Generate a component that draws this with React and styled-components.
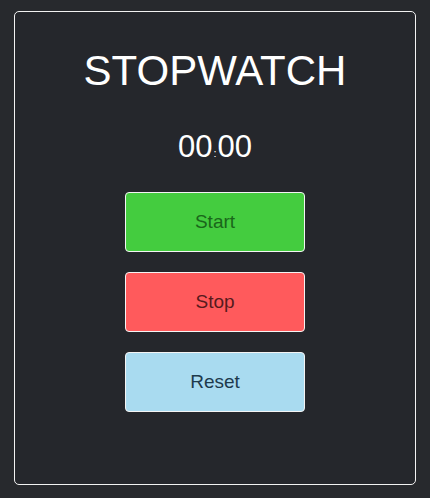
import React, { useEffect, useRef, useState } from "react";
import styled, { createGlobalStyle } from "styled-components";

const GlobalStyle = createGlobalStyle`
  html, body {
    margin: 0;
    padding: 0;
    background: #27292d;
    font-family: "Liberation Sans", Arial, sans-serif;
  }
`;

const Page = styled.div`
  padding: 11px 14px 13px;
  box-sizing: border-box;
  width: 430px;
`;

const Card = styled.section`
  box-sizing: border-box;
  height: 474px;
  border: 1px solid #f2f2f2;
  border-radius: 5px;
  background: #25272c;
  display: flex;
  flex-direction: column;
  align-items: center;
  padding-top: 36px;
`;

const Title = styled.h1`
  margin: 0;
  color: #ffffff;
  font-size: 42px;
  font-weight: 400;
  line-height: 46px;
`;

const Time = styled.div`
  margin-top: 35px;
  color: #ffffff;
  font-size: 31px;
  line-height: 36px;
  display: flex;
  align-items: baseline;
`;

const Colon = styled.span`
  font-size: 11px;
  margin: 0 1px;
`;

const Controls = styled.div`
  margin-top: 21px;
  display: flex;
  flex-direction: column;
  gap: 20px;
`;

const Button = styled.button`
  box-sizing: border-box;
  width: 180px;
  height: 60px;
  border: 1px solid #f4f4f4;
  border-radius: 4px;
  background: ${(p) => p.$bg};
  color: ${(p) => p.$fg};
  font-family: "Liberation Sans", Arial, sans-serif;
  font-size: 19px;
  cursor: pointer;
`;

const pad = (n) => String(n).padStart(2, "0");

export default function App() {
  const [secs, setSecs] = useState(0);
  const timer = useRef(null);

  const start = () => {
    if (timer.current) return;
    timer.current = setInterval(() => setSecs((s) => s + 1), 1000);
  };
  const stop = () => {
    clearInterval(timer.current);
    timer.current = null;
  };
  const reset = () => {
    stop();
    setSecs(0);
  };

  useEffect(() => stop, []);

  return (
    <>
      <GlobalStyle />
      <Page>
        <Card>
          <Title>STOPWATCH</Title>
          <Time>
            {pad(Math.floor(secs / 60))}
            <Colon>:</Colon>
            {pad(secs % 60)}
          </Time>
          <Controls>
            <Button $bg="#44cc3f" $fg="#1a661a" onClick={start}>
              Start
            </Button>
            <Button $bg="#ff5a5c" $fg="#561a1c" onClick={stop}>
              Stop
            </Button>
            <Button $bg="#a9dbf0" $fg="#1d3a4c" onClick={reset}>
              Reset
            </Button>
          </Controls>
        </Card>
      </Page>
    </>
  );
}
